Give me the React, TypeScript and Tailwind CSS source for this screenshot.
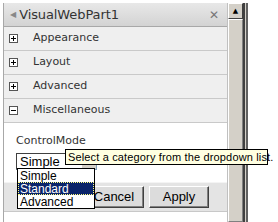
import { ChevronDown } from 'lucide-react';

const sections = ['Appearance', 'Layout', 'Advanced'];

const Box = ({ open }: { open?: boolean }) => (
  <div className="w-[9px] h-[9px] border border-[#555] bg-white relative shrink-0">
    <div className="absolute left-[1px] top-[3px] w-[5px] h-[1px] bg-black" />
    {!open && <div className="absolute left-[3px] top-[1px] w-[1px] h-[5px] bg-black" />}
  </div>
);

const WinButton = ({ label }: { label: string }) => (
  <div className="h-[22px] w-[60px] flex items-center justify-center bg-[#dcdcdc] border border-t-white border-l-white border-r-[#404040] border-b-[#404040] shadow-[inset_-1px_-1px_0_#808080] text-[13px] text-black font-['Liberation_Sans',sans-serif]">
    {label}
  </div>
);

export default function App() {
  return (
    <div className="w-[278px] h-[222px] bg-white flex overflow-hidden relative font-['DejaVu_Sans',sans-serif]">
      <div className="w-[3px] shrink-0" />
      <div className="w-[225px] shrink-0 mt-[3px] flex flex-col border-l border-[#a8a8a8] border-r border-r-[#c0c0c0]">
        <div className="h-[24px] flex items-center bg-gradient-to-b from-[#e8e8e8] to-[#d3d3d3] border-b border-[#a8a8a8]">
          <span className="ml-[6px] text-[8px] text-[#888] leading-none">◀</span>
          <span className="ml-[3px] text-[13px] text-[#333] tracking-[-0.1px]">VisualWebPart1</span>
          <span className="ml-auto mr-[8px] text-[#777] text-[12px] font-bold leading-none">✕</span>
        </div>
        {sections.map((s) => (
          <div key={s} className="h-[24px] flex items-center bg-[#efefef] border-b border-[#c9c9c9] pl-[5px]">
            <Box />
            <span className="ml-[15px] text-[11px] text-[#333]">{s}</span>
          </div>
        ))}
        <div className="h-[24px] flex items-center bg-[#efefef] border-b border-[#c9c9c9] pl-[5px]">
          <Box open />
          <span className="ml-[15px] text-[11px] text-[#333]">Miscellaneous</span>
        </div>
        <div className="flex-1 flex flex-col pl-[12px] pt-[11px]">
          <div className="text-[11px] text-[#333] leading-[13px]">ControlMode</div>
          <div className="mt-[6px] w-[81px] h-[17px] border border-[#7f9db9] border-l-[#404040] border-t-[#404040] bg-white flex items-center">
            <span className="ml-[3px] text-[13px] text-black font-['Liberation_Sans',sans-serif]">Simple</span>
            <div className="ml-auto w-[15px] h-full bg-[#d4d0c8] flex items-center justify-center border-l border-white">
              <ChevronDown size={10} />
            </div>
          </div>
        </div>
        <div className="h-[30px] mb-[10px] bg-[#e4e4e4] border-t border-[#f4f4f4] border-b border-b-[#c8c8c8] flex items-center justify-end gap-[5px] pr-[18px]">
          <WinButton label="OK" />
          <WinButton label="Cancel" />
          <WinButton label="Apply" />
        </div>
      </div>
      <div className="w-[15px] shrink-0 mt-[3px] flex flex-col bg-[#d4d0c8]">
        <div className="h-[16px] flex items-center justify-center border border-t-white border-l-white border-r-[#404040] border-b-[#404040]">
          <span className="text-[7px] leading-none">▲</span>
        </div>
        <div className="flex-1 border border-t-white border-l-white border-r-[#808080] border-b-[#808080]" />
      </div>
      <div className="w-[2px] shrink-0 bg-[#404040] mt-[3px]" />
      <div className="w-[1px] shrink-0 bg-[#d4d0c8] mt-[3px]" />
      <div className="w-[2px] shrink-0 bg-[#606060] mt-[3px]" />

      <div className="absolute left-[65px] top-[149px] h-[16px] w-[203px] px-[2px] bg-[#ffffe1] border border-black flex items-center text-[11px] tracking-[0.15px] text-black whitespace-nowrap leading-none font-['Liberation_Sans',sans-serif]">
        Select a category from the dropdown list.
      </div>

      <div className="absolute left-[17px] top-[168px] w-[78px] border border-black bg-white text-[12px] font-['Liberation_Sans',sans-serif]">
        <div className="pl-[2px] h-[13px] flex items-center overflow-hidden leading-none">Simple</div>
        <div className="pl-[2px] h-[13px] flex items-center overflow-hidden leading-none bg-[#0a246a] text-white outline-1 outline-dotted outline-[#ffff80] -outline-offset-1">Standard</div>
        <div className="pl-[2px] h-[13px] flex items-center overflow-hidden leading-none">Advanced</div>
      </div>
    </div>
  );
}
